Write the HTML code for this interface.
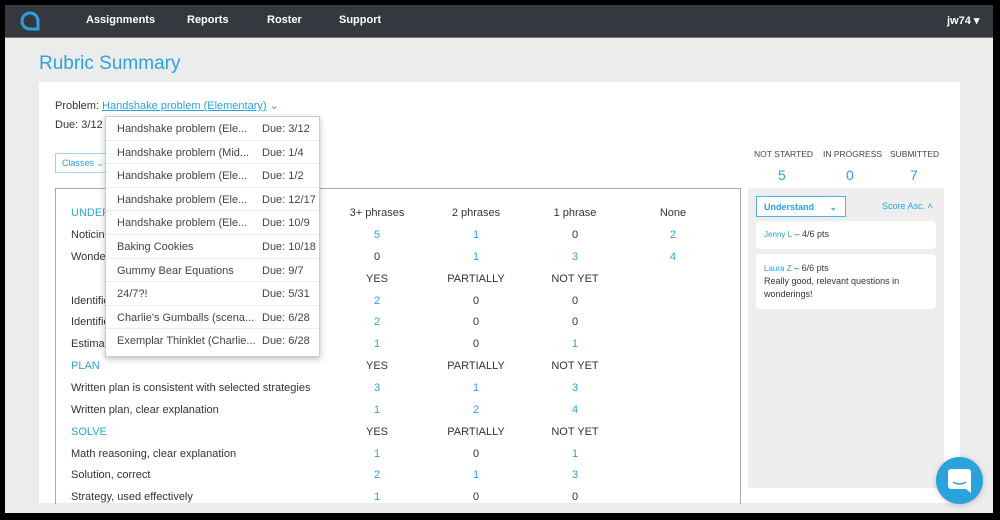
<!DOCTYPE html>
<html><head><meta charset="utf-8"><style>
*{margin:0;padding:0;box-sizing:border-box}
body{width:1000px;height:520px;background:#000;font-family:"Liberation Sans",sans-serif;position:relative;overflow:hidden;color:#333}
.a{position:absolute;white-space:nowrap}
.nav{left:5px;top:5px;width:988px;height:33px;background:#363840;border-bottom:1px solid #777}
.nav .l{position:absolute;top:9px;color:#fff;font-weight:bold;font-size:11px}
.page{left:5px;top:38px;width:988px;height:475px;background:#ececec}
.b{color:#2aa3dd}
.t{font-size:11px}
.c{position:absolute;width:60px;text-align:center;font-size:11px;margin-left:-30px}
.dd{left:105px;top:116px;width:215px;height:241px;background:#fff;border:1px solid #ccc;box-shadow:0 2px 6px rgba(0,0,0,.25)}
.dd div{position:absolute;left:0;width:213px;height:23.6px;border-bottom:1px solid #eee;font-size:11px;color:#444}
.dd span{position:absolute;top:6px}
</style></head><body>
<div class="a nav">
<svg style="position:absolute;left:14px;top:5px" width="22" height="22" viewBox="0 0 22 22"><path d="M19 11A8 8 0 1 0 11 19H19V11" fill="none" stroke="#2aa3dd" stroke-width="3"/></svg>
<span class="l" style="left:81px">Assignments</span><span class="l" style="left:182px">Reports</span><span class="l" style="left:262px">Roster</span><span class="l" style="left:334px">Support</span>
<span class="l" style="left:942px">jw74 ▾</span>
</div>
<div class="a page"></div>
<div class="a b" style="left:39px;top:53px;font-size:19px">Rubric Summary</div>
<div class="a" style="left:39px;top:82px;width:921px;height:421px;background:#fff"></div>
<div class="a t" style="left:55px;top:99px">Problem: <span class="b" style="text-decoration:underline">Handshake problem (Elementary)</span><span class="b"> ⌄</span></div>
<div class="a t" style="left:55px;top:119px">Due: 3/12</div>
<div class="a b" style="left:55px;top:153px;width:52px;height:20px;border:1px solid #9cd3ee;font-size:9px;padding:4px 0 0 6px">Classes ⌄</div>
<div class="a" style="left:55px;top:188px;width:686px;height:316px;border:1px solid #aaa;border-bottom:none"></div>
<div class="a" style="left:754px;top:149px;font-size:8.5px;color:#444">NOT STARTED</div>
<div class="a" style="left:823px;top:149px;font-size:8.5px;color:#444">IN PROGRESS</div>
<div class="a" style="left:890px;top:149px;font-size:8.5px;color:#444">SUBMITTED</div>
<div class="a b" style="left:778px;top:167px;font-size:14px">5</div>
<div class="a b" style="left:846px;top:167px;font-size:14px">0</div>
<div class="a b" style="left:910px;top:167px;font-size:14px">7</div>
<div class="a" style="left:748px;top:188px;width:196px;height:300px;background:#eee"></div>
<div class="a b" style="left:756px;top:196px;width:90px;height:21px;border:1px solid #4fb3e3;background:#fff;font-size:9px;padding:5px 0 0 7px;font-weight:bold">Understand<span style="position:absolute;right:8px">⌄</span></div>
<div class="a b" style="left:882px;top:201px;font-size:9px">Score Asc. ˄</div>
<div class="a" style="left:756px;top:221px;width:180px;height:28px;background:#fff;border-radius:4px;font-size:9px;padding:8px 0 0 8px"><span class="b" style="font-size:8px">Jenny L</span> – 4/6 pts</div>
<div class="a" style="left:756px;top:254px;width:180px;height:55px;background:#fff;border-radius:4px;font-size:9px;padding:8px 8px 0 8px;line-height:13px;white-space:normal"><span class="b" style="font-size:8px">Laura Z</span> – 6/6 pts<br>Really good, relevant questions in wonderings!</div>
<div class="a b t" style="left:71px;top:207px">UNDERSTAND</div>
<div class="a t" style="left:71px;top:229px">Noticing</div>
<div class="a t" style="left:71px;top:251px">Wondering</div>
<div class="a t" style="left:71px;top:295px">Identifies</div>
<div class="a t" style="left:71px;top:316px">Identifies</div>
<div class="a t" style="left:71px;top:338px">Estimate</div>
<div class="a b t" style="left:71px;top:360px">PLAN</div>
<div class="a t" style="left:71px;top:382px">Written plan is consistent with selected strategies</div>
<div class="a t" style="left:71px;top:404px">Written plan, clear explanation</div>
<div class="a b t" style="left:71px;top:426px">SOLVE</div>
<div class="a t" style="left:71px;top:448px">Math reasoning, clear explanation</div>
<div class="a t" style="left:71px;top:469px">Solution, correct</div>
<div class="a t" style="left:71px;top:491px">Strategy, used effectively</div>
<div class="a" style="left:0;top:207px;width:1000px">
<span class="c" style="left:377px">3+ phrases</span><span class="c" style="left:476px">2 phrases</span><span class="c" style="left:575px">1 phrase</span><span class="c" style="left:673px">None</span></div>
<div class="a" style="left:0;top:229px;width:1000px"><span class="c b" style="left:377px">5</span><span class="c b" style="left:476px">1</span><span class="c" style="left:575px">0</span><span class="c b" style="left:673px">2</span></div>
<div class="a" style="left:0;top:251px;width:1000px"><span class="c" style="left:377px">0</span><span class="c b" style="left:476px">1</span><span class="c b" style="left:575px">3</span><span class="c b" style="left:673px">4</span></div>
<div class="a" style="left:0;top:273px;width:1000px"><span class="c" style="left:377px">YES</span><span class="c" style="left:476px">PARTIALLY</span><span class="c" style="left:575px">NOT YET</span></div>
<div class="a" style="left:0;top:295px;width:1000px"><span class="c b" style="left:377px">2</span><span class="c" style="left:476px">0</span><span class="c" style="left:575px">0</span></div>
<div class="a" style="left:0;top:316px;width:1000px"><span class="c b" style="left:377px">2</span><span class="c" style="left:476px">0</span><span class="c" style="left:575px">0</span></div>
<div class="a" style="left:0;top:338px;width:1000px"><span class="c b" style="left:377px">1</span><span class="c" style="left:476px">0</span><span class="c b" style="left:575px">1</span></div>
<div class="a" style="left:0;top:360px;width:1000px"><span class="c" style="left:377px">YES</span><span class="c" style="left:476px">PARTIALLY</span><span class="c" style="left:575px">NOT YET</span></div>
<div class="a" style="left:0;top:382px;width:1000px"><span class="c b" style="left:377px">3</span><span class="c b" style="left:476px">1</span><span class="c b" style="left:575px">3</span></div>
<div class="a" style="left:0;top:404px;width:1000px"><span class="c b" style="left:377px">1</span><span class="c b" style="left:476px">2</span><span class="c b" style="left:575px">4</span></div>
<div class="a" style="left:0;top:426px;width:1000px"><span class="c" style="left:377px">YES</span><span class="c" style="left:476px">PARTIALLY</span><span class="c" style="left:575px">NOT YET</span></div>
<div class="a" style="left:0;top:448px;width:1000px"><span class="c b" style="left:377px">1</span><span class="c" style="left:476px">0</span><span class="c b" style="left:575px">1</span></div>
<div class="a" style="left:0;top:469px;width:1000px"><span class="c b" style="left:377px">2</span><span class="c b" style="left:476px">1</span><span class="c b" style="left:575px">3</span></div>
<div class="a" style="left:0;top:491px;width:1000px"><span class="c b" style="left:377px">1</span><span class="c" style="left:476px">0</span><span class="c" style="left:575px">0</span></div>
<div class="a dd">
<div style="top:0"><span style="left:11px">Handshake problem (Ele...</span><span style="left:156px">Due: 3/12</span></div>
<div style="top:23.6px"><span style="left:11px">Handshake problem (Mid...</span><span style="left:156px">Due: 1/4</span></div>
<div style="top:47.2px"><span style="left:11px">Handshake problem (Ele...</span><span style="left:156px">Due: 1/2</span></div>
<div style="top:70.8px"><span style="left:11px">Handshake problem (Ele...</span><span style="left:156px">Due: 12/17</span></div>
<div style="top:94.4px"><span style="left:11px">Handshake problem (Ele...</span><span style="left:156px">Due: 10/9</span></div>
<div style="top:118px"><span style="left:11px">Baking Cookies</span><span style="left:156px">Due: 10/18</span></div>
<div style="top:141.6px"><span style="left:11px">Gummy Bear Equations</span><span style="left:156px">Due: 9/7</span></div>
<div style="top:165.2px"><span style="left:11px">24/7?!</span><span style="left:156px">Due: 5/31</span></div>
<div style="top:188.8px"><span style="left:11px">Charlie's Gumballs (scena...</span><span style="left:156px">Due: 6/28</span></div>
<div style="top:212.4px;border:none"><span style="left:11px">Exemplar Thinklet (Charlie...</span><span style="left:156px">Due: 6/28</span></div>
</div>
<div class="a" style="left:936px;top:457px;width:47px;height:47px;border-radius:50%;background:#2aa3dd;box-shadow:0 1px 6px rgba(0,0,0,.2)">
<svg style="position:absolute;left:12px;top:12px" width="23" height="24" viewBox="0 0 23 24"><path d="M3 0H20A3 3 0 0 1 23 3V24L18 20H3A3 3 0 0 1 0 17V3A3 3 0 0 1 3 0Z" fill="#fff"/><path d="M5 13Q11.5 17 18 13" fill="none" stroke="#2aa3dd" stroke-width="1.5"/></svg></div>
</body></html>
